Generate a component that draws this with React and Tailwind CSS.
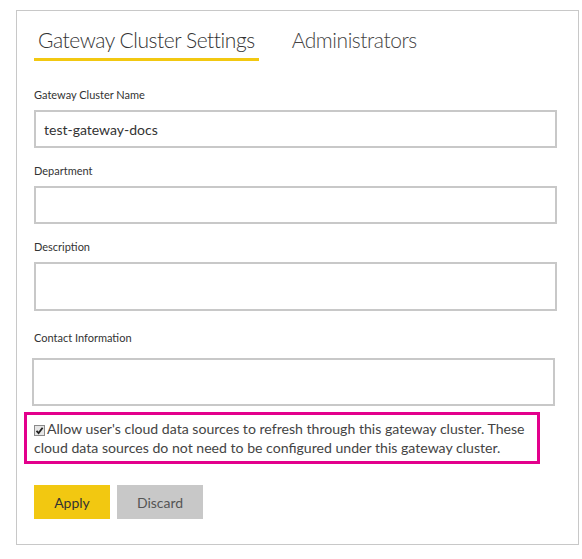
import React from 'react'

export default function App() {
  return (
    <div
      className="w-[582px] h-[559px] bg-white pt-[10px] pl-[16px]"
      style={{ fontFamily: 'Lato, "Open Sans", sans-serif' }}
    >
      <div className="w-[563px] h-[535px] border border-[#c8c8c8] pl-[17px]">
        {/* tabs */}
        <div className="flex items-end mt-[14px]">
          <div className="px-[4px] pb-[3px] border-b-[3px] border-[#f2c811] text-[21px] leading-[30px] font-light tracking-[-0.45px] text-[#333]">
            Gateway Cluster Settings
          </div>
          <div className="ml-[29px] px-[4px] pb-[6px] text-[21px] leading-[30px] font-light tracking-[-0.45px] text-[#444]">
            Administrators
          </div>
        </div>

        <div className="mt-[26px]">
          <div className="text-[11px] leading-[16px] text-[#333]">Gateway Cluster Name</div>
          <div className="mt-[7px] w-[523px] h-[38px] border-2 border-[#c8c8c8] flex items-center pl-[8px] text-[14px] text-[#333]">
            test-gateway-docs
          </div>
        </div>

        <div className="mt-[15px]">
          <div className="text-[11px] leading-[16px] text-[#333]">Department</div>
          <div className="mt-[7px] w-[523px] h-[38px] border-2 border-[#c8c8c8]" />
        </div>

        <div className="mt-[15px]">
          <div className="text-[11px] leading-[16px] text-[#333]">Description</div>
          <div className="mt-[7px] w-[523px] h-[49px] border-2 border-[#c8c8c8]" />
        </div>

        <div className="mt-[19px]">
          <div className="text-[11px] leading-[16px] text-[#333]">Contact Information</div>
          <div className="mt-[12px] -ml-[2px] w-[523px] h-[48px] border-2 border-[#c8c8c8]" />
        </div>

        {/* highlighted checkbox */}
        <div className="mt-[6px] -ml-[10px] w-[516px] h-[52px] border-[3px] border-[#e3008c] pl-[7px] pt-[4px] text-[14.1px] leading-[19px] text-[#444] whitespace-nowrap">
          <span className="inline-flex align-[-1px] w-[11px] h-[11px] border border-[#8a8a8a] bg-[#e6e6e6] items-center justify-center mr-[2px]">
            <svg width="9" height="9" viewBox="0 0 9 9">
              <path d="M1.5 4.8 L3.6 7 L7.6 1.8" fill="none" stroke="#222" strokeWidth="1.8" />
            </svg>
          </span>
          Allow user's cloud data sources to refresh through this gateway cluster. These
          <br />
          cloud data sources do not need to be configured under this gateway cluster.
        </div>

        {/* buttons */}
        <div className="flex gap-[7px] mt-[21px]">
          <button className="w-[76px] h-[34px] bg-[#f2c811] text-[14px] text-[#333]">Apply</button>
          <button className="w-[86px] h-[34px] bg-[#c8c8c8] text-[14px] text-[#555]">Discard</button>
        </div>
      </div>
    </div>
  )
}
